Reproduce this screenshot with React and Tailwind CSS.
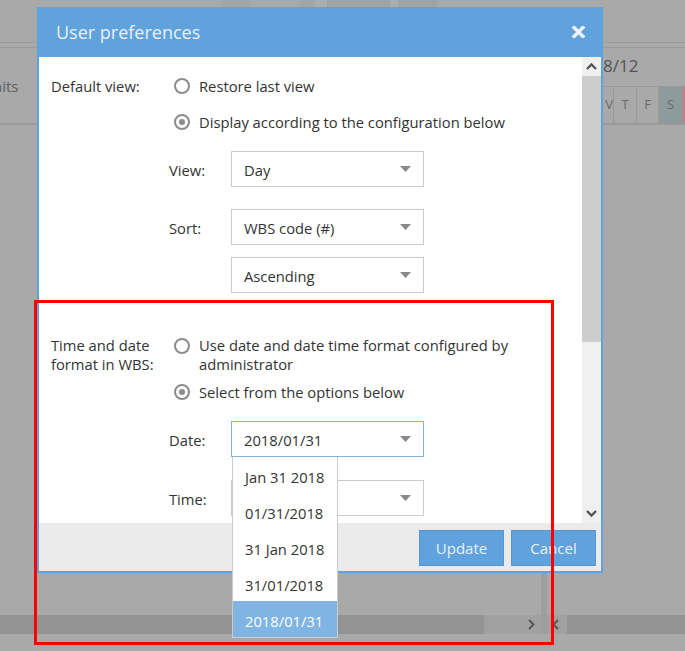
import React from "react";

const FONT = { fontFamily: '"Open Sans", "Liberation Sans", sans-serif' };

function Radio({ checked }) {
  return (
    <span className="w-[16px] h-[16px] shrink-0 rounded-full border-2 border-[#8c8c8c] bg-white flex items-center justify-center">
      {checked && <span className="w-[6px] h-[6px] rounded-full bg-[#8c8c8c]" />}
    </span>
  );
}

function Caret() {
  return (
    <svg width="11" height="6" viewBox="0 0 11 6" className="shrink-0">
      <path d="M0 0 H11 L5.5 6 Z" fill="#8a8a8a" />
    </svg>
  );
}

function Select({ value, focused, children }) {
  return (
    <div
      className={`relative w-[193px] h-[36px] border bg-white flex items-center justify-between pl-[12px] pr-[12px] text-[#333] ${
        focused ? "border-[#7fb2e0]" : "border-[#cccccc]"
      }`}
    >
      <span className="pt-[3px]">{value}</span>
      <Caret />
      {children}
    </div>
  );
}

function Chevron({ up }) {
  return (
    <svg width="11" height="7" viewBox="0 0 11 7">
      <path
        d={up ? "M1 6 L5.5 1.5 L10 6" : "M1 1 L5.5 5.5 L10 1"}
        fill="none"
        stroke="#555"
        strokeWidth="2.4"
      />
    </svg>
  );
}

export default function App() {
  const options = ["Jan 31 2018", "01/31/2018", "31 Jan 2018", "31/01/2018", "2018/01/31"];
  return (
    <div
      className="relative w-[685px] h-[651px] overflow-hidden bg-[#a9a9a9] flex flex-col text-[14.75px]"
      style={FONT}
    >
      {/* background app */}
      <div className="h-[7px] flex">
        <div className="w-[222px]" />
        <div className="w-[28px] bg-[#a4a4a4]" />
        <div className="w-[50px]" />
        <div className="w-[15px] bg-[#a4a4a4]" />
        <div className="w-[12px] bg-[#acacac]" />
        <div className="w-[63px] bg-[#a2a2a2]" />
        <div className="w-[8px] bg-[#acacac]" />
        <div className="w-[39px] bg-[#a2a2a2]" />
      </div>
      <div className="h-[35px]" />
      <div className="h-px bg-[#9b9b9b]" />
      <div className="h-[4px]" />
      <div className="h-px bg-[#9b9b9b]" />
      <div className="h-[75px] flex justify-between">
        <div className="pt-[28px] text-[15px] text-[#5e5e5e] leading-[20px] ml-[-18px]">Units</div>
        <div className="w-[82px] flex flex-col">
          <div className="pt-[8px] h-[38px] text-[17px] leading-[20px] text-[#555]">8/12</div>
          <div className="flex-1 flex text-[13px] text-[#6a6a6a] border-t border-[#9a9a9a]">
            <div className="w-[11px] border-r border-[#9a9a9a] flex items-center justify-end">V</div>
            <div className="w-[23px] border-r border-[#9a9a9a] flex items-center justify-center">T</div>
            <div className="w-[22px] border-r border-[#9a9a9a] flex items-center justify-center">F</div>
            <div className="w-[23px] bg-[#8e9b9c] flex items-center justify-center">S</div>
            <div className="w-[3px] bg-[#b08888]" />
          </div>
        </div>
      </div>
      <div className="h-[2px] bg-[#9a9a9a]" />
      <div className="flex-1 flex">
        <div className="w-[541px]" />
        <div className="w-[6px] bg-[#9e9e9e]" />
      </div>
      <div className="h-[19px] flex">
        <div className="w-[484px] bg-[#939393]" />
        <div className="w-[57px] bg-[#a1a1a1] flex items-center justify-end pr-[6px]">
          <svg width="7" height="11" viewBox="0 0 7 11">
            <path d="M1 1 L5.5 5.5 L1 10" fill="none" stroke="#555" strokeWidth="2" />
          </svg>
        </div>
        <div className="w-[6px] bg-[#9e9e9e]" />
        <div className="w-[20px] bg-[#a1a1a1] flex items-center pl-[5px]">
          <svg width="7" height="11" viewBox="0 0 7 11">
            <path d="M6 1 L1.5 5.5 L6 10" fill="none" stroke="#555" strokeWidth="2" />
          </svg>
        </div>
        <div className="flex-1 bg-[#939393]" />
      </div>
      <div className="h-[17px]" />

      {/* dialog */}
      <div className="absolute left-[37px] top-[7px] w-[566px] flex flex-col">
        <div className="h-[50px] bg-[#5fa2dc] flex items-center justify-between pl-[19px] pr-[18px]">
          <span className="text-[18px] text-[#e8f0f9]">User preferences</span>
          <svg width="13" height="12" viewBox="0 0 13 12">
            <path d="M2 1.5 L11 10.5 M11 1.5 L2 10.5" stroke="#eef4fb" strokeWidth="3.4" strokeLinecap="square" />
          </svg>
        </div>
        <div className="border-x-2 border-b-2 border-[#5fa2dc] flex flex-col">
          <div className="h-[466px] flex">
            <div className="flex-1 bg-white pl-[12px] pt-[19px] text-[#333]">
              {/* Default view */}
              <div className="grid grid-cols-[123px_1fr]">
                <div className="leading-[20px]">Default view:</div>
                <div className="flex flex-col">
                  <div className="h-[20px] flex items-center gap-[9px]">
                    <Radio />
                    <span>Restore last view</span>
                  </div>
                  <div className="mt-[16px] h-[20px] flex items-center gap-[9px]">
                    <Radio checked />
                    <span>Display according to the configuration below</span>
                  </div>
                  <div className="ml-[-5px] flex flex-col">
                    <div className="mt-[19px] flex items-center">
                      <span className="w-[62px] pt-[3px]">View:</span>
                      <Select value="Day" />
                    </div>
                    <div className="mt-[22px] flex items-center">
                      <span className="w-[62px] pt-[3px]">Sort:</span>
                      <Select value="WBS code (#)" />
                    </div>
                    <div className="mt-[12px] flex items-center pl-[62px]">
                      <Select value="Ascending" />
                    </div>
                  </div>
                </div>
              </div>
              {/* Time and date */}
              <div className="mt-[43px] grid grid-cols-[123px_1fr]">
                <div className="leading-[19px]">
                  Time and date
                  <br />
                  format in WBS:
                </div>
                <div className="flex flex-col">
                  <div className="flex items-start gap-[9px]">
                    <span className="h-[19px] flex items-center">
                      <Radio />
                    </span>
                    <span className="leading-[19px]">
                      Use date and date time format configured by
                      <br />
                      administrator
                    </span>
                  </div>
                  <div className="mt-[8px] h-[20px] flex items-center gap-[9px]">
                    <Radio checked />
                    <span className="pt-[1px]">Select from the options below</span>
                  </div>
                  <div className="ml-[-5px] flex flex-col">
                    <div className="mt-[19px] flex items-center">
                      <span className="w-[62px] pt-[3px]">Date:</span>
                      <Select value="2018/01/31" focused>
                        <div className="absolute left-0 top-[35px] w-[106px] z-10 bg-white border-x border-b border-[#cccccc] flex flex-col">
                          {options.map((o, i) => (
                            <div
                              key={o}
                              className={`h-[36px] pl-[12px] pt-[4px] flex items-center ${
                                i === options.length - 1 ? "bg-[#7fb4e3] text-white" : "text-[#333]"
                              }`}
                            >
                              {o}
                            </div>
                          ))}
                        </div>
                      </Select>
                    </div>
                    <div className="mt-[23px] flex items-center">
                      <span className="w-[62px] pt-[3px]">Time:</span>
                      <Select value="" />
                    </div>
                  </div>
                </div>
              </div>
            </div>
            <div className="w-[19px] flex flex-col bg-[#f0f0f0]">
              <div className="h-[19px] flex items-center justify-center">
                <Chevron up />
              </div>
              <div className="h-[266px] bg-[#cdcdcd]" />
              <div className="flex-1" />
              <div className="h-[19px] flex items-center justify-center">
                <Chevron />
              </div>
            </div>
          </div>
          <div className="h-[48px] bg-[#ebebeb] flex justify-end items-start pt-[7px] pr-[5px] gap-[7px]">
            <button className="w-[85px] h-[36px] bg-[#5fa2dc] border border-[#5596d2] text-[15px] text-[#e8f0f9]">
              Update
            </button>
            <button className="w-[85px] h-[36px] bg-[#5fa2dc] border border-[#5596d2] text-[15px] text-[#e8f0f9]">
              Cancel
            </button>
          </div>
        </div>
      </div>

      {/* annotation */}
      <div className="absolute left-[34px] top-[300px] w-[520px] h-[345px] border-[3px] border-[#ff0000] z-20 pointer-events-none" />
    </div>
  );
}
